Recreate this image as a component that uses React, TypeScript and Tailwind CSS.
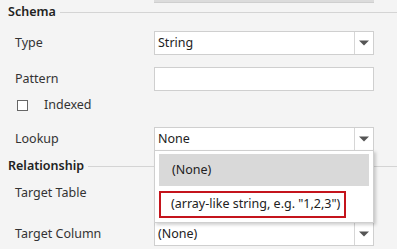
import React from "react";

const Arrow = () => (
  <svg width="10" height="6" viewBox="0 0 10 6" className="block">
    <path d="M0 0.5h10L5 5.5z" fill="#555" />
  </svg>
);

const SelectBox = ({ value }: { value: string }) => (
  <div className="flex h-[24px] w-[220px] border border-[#cfcfcf] bg-white">
    <div className="flex flex-1 items-center pl-[3px] text-[12.5px] text-[#222]">
      {value}
    </div>
    <div className="flex w-[19px] items-center justify-center border-l border-[#d6d6d6]">
      <Arrow />
    </div>
  </div>
);

const Row = ({
  label,
  children,
  className = "",
}: {
  label: string;
  children?: React.ReactNode;
  className?: string;
}) => (
  <div className={`flex h-[24px] items-center ${className}`}>
    <div className="w-[154px] pl-[15px] text-[12.5px] text-[#333]">{label}</div>
    {children}
  </div>
);

const Header = ({ title, className = "" }: { title: string; className?: string }) => (
  <div className={`flex h-[18px] items-center ${className}`}>
    <span className="pl-[8px] pr-[4px] text-[12.5px] font-semibold text-[#222]">
      {title}
    </span>
    <div className="h-px flex-1 bg-[#d4d4d4]" />
  </div>
);

export default function App() {
  return (
    <div
      className="relative h-[249px] w-[397px] overflow-hidden bg-[#f4f4f4]"
      style={{ fontFamily: '"Noto Sans", "Open Sans", sans-serif' }}
    >
      <div className="ml-[154px] h-[3px] w-[220px] border-b border-[#cfcfcf] bg-[#dcdcdc]" />
      <Header title="Schema" className="mt-0" />

      <Row label="Type" className="mt-[10px]">
        <SelectBox value="String" />
      </Row>
      <Row label="Pattern" className="mt-[12px]">
        <div className="h-[24px] w-[220px] border border-[#cfcfcf] bg-white" />
      </Row>
      <div className="mt-[2px] flex h-[24px] items-center pl-[17px]">
        <div className="h-[11px] w-[11px] border border-[#666] bg-white" />
        <span className="pl-[16px] text-[12.5px] text-[#333]">Indexed</span>
      </div>
      <Row label="Lookup" className="mt-[10px]">
        <SelectBox value="None" />
      </Row>

      <Header title="Relationship" className="mt-[6px]" />

      <Row label="Target Table" className="mt-[6px]">
        <SelectBox value="" />
      </Row>
      <Row label="Target Column" className="mt-[17px]">
        <SelectBox value="(None)" />
      </Row>

      <div className="absolute left-[154px] top-[150px] flex h-[73px] w-[220px] flex-col border border-[#cfcfcf] bg-white pl-[4px] pr-[4px] pt-[3px] shadow-[2px_2px_3px_rgba(0,0,0,0.18)]">
        <div className="flex h-[32px] items-center bg-[#d9d9d9] pl-[13px] text-[12.5px] text-[#222]">
          (None)
        </div>
        <div className="mt-[5px] flex h-[27px] w-[187px] items-center border-2 border-[#c4141c] pl-[10px] text-[12.5px] text-[#222]">
          (array-like string, e.g. "1,2,3")
        </div>
      </div>
    </div>
  );
}
